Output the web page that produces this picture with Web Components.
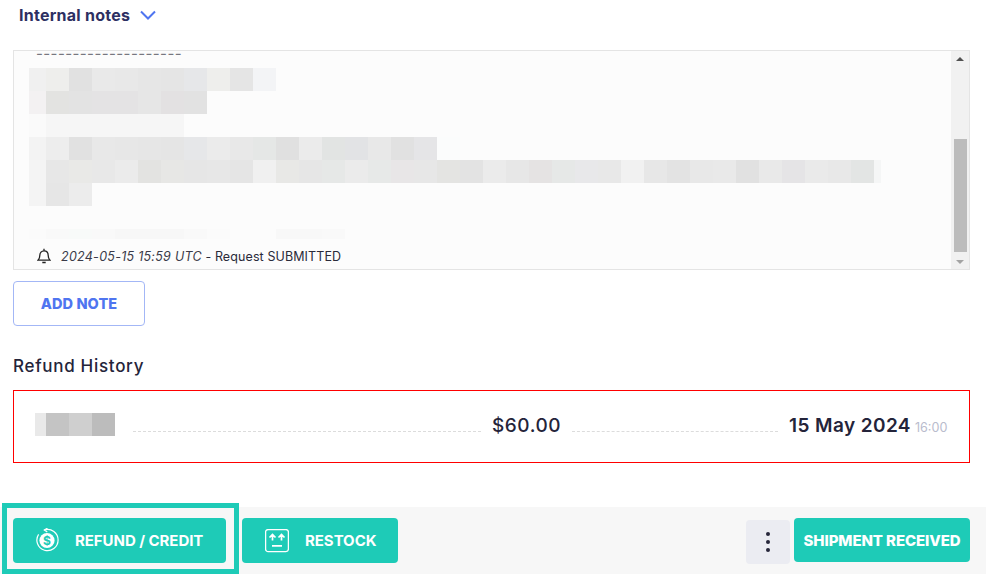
<!DOCTYPE html>
<html lang="en"><head><meta charset="utf-8"><title>Order notes</title>
<style>
html,body{margin:0;padding:0;background:#fff;overflow:hidden;height:574px}
body{font-family:Inter,"Open Sans",sans-serif;color:#24243a}
</style></head><body>
<order-panel></order-panel>
<script>
const tpl=(css,html)=>`<style>${css}</style>${html}`;
class Base extends HTMLElement{constructor(){super();this.attachShadow({mode:'open'});}}

class PixelMosaic extends Base{
  connectedCallback(){
    const first=+(this.getAttribute('first')||17), cell=+(this.getAttribute('cell')||23), h=+(this.getAttribute('row')||23);
    const rows=(this.getAttribute('data')||'').split('|');
    let out='';
    rows.forEach(r=>{
      let m=r.split(':'),rh=m.length>1?+m[0]:h,cols=(m.length>1?m[1]:r).trim();
      out+=`<div class="r" style="height:${rh}px">`;
      if(cols) cols.split(' ').forEach((c,i)=>{
        let w=i===0?first:cell; let p=c.split('/'); if(p[1]) w=+p[1];
        out+=`<i style="width:${w}px;background:${p[0]==='-'?'transparent':'#'+p[0]}"></i>`;
      });
      out+='</div>';
    });
    this.shadowRoot.innerHTML=tpl(`:host{display:block}.r{display:flex}i{display:block;flex:none}`,out);
  }
}
customElements.define('pixel-mosaic',PixelMosaic);

class NotesHeader extends Base{
  connectedCallback(){
    this.shadowRoot.innerHTML=tpl(`:host{display:flex;align-items:center;height:30px;padding-left:19px;font-size:16px;font-weight:700;color:#2d2f62;letter-spacing:.25px}
    svg{margin-left:9px;display:block}`,
    `<span>Internal notes</span><svg width="18" height="10" viewBox="0 0 18 10" fill="none"><path d="M2 1.500l7 7 7-7" stroke="#4f75f0" stroke-width="2"/></svg>`);
  }
}
customElements.define('notes-header',NotesHeader);

class NotesBox extends Base{
  connectedCallback(){
    this.shadowRoot.innerHTML=tpl(`:host{display:flex;box-sizing:border-box;height:220px;border:1px solid #e4e4e4;background:#fcfcfc}
    .c{flex:1;min-width:0;padding-left:15px;display:flex;flex-direction:column}
    .d{height:17px;padding-left:7px;font-size:15px;line-height:5px;color:#77777f;letter-spacing:.4px;white-space:nowrap}
    .log{display:flex;align-items:center;height:30px;padding:4px 0 0 8px;box-sizing:border-box;font-size:12.500px;letter-spacing:.1px;color:#2a2a3a;white-space:pre}
    .log svg{margin-right:10px;flex:none}
    em{font-style:italic;letter-spacing:.27px;color:#3a3a48}
    .bar{flex:none;width:18px;background:#f1f1f1;display:flex;flex-direction:column;align-items:center;box-sizing:border-box}
    .up,.dn{width:0;height:0;border-left:4px solid transparent;border-right:4px solid transparent}
    .up{border-bottom:4px solid #505050;margin-top:6px}
    .dn{border-top:4px solid #a3a3a3;margin-top:auto;margin-bottom:5px}
    .th{width:13px;height:113px;background:#bcbcbc;margin-top:78px}
    `,`<div class="c"><div class="d">--------------------</div>
    <pixel-mosaic data="f0f0f0 eeeeec e1e1e1 e9e9e9 e8e8e8 e6e6e6 e5e5e5 e6e7e9 eeeeec e5e5e5 f3f4f6|f3f1f2 e3e3e1 e3e3e3 e4e3e4 e4e3e4 e6e6e6 e3e1e2 e2e2e2|fafafa f6f6f6 f6f6f6 f6f6f6 f6f6f6 f6f6f6 f6f6f6|f3f3f3 ededed e1e1e1 e8e8e8 e7e7e7 e6e6e6 e5e5e5 e6e7e9 ebebeb e8e8e8 e5e7e6 e0e0e0 ebebeb e2e4e3 e2e3e5 e8e8e8 e1e1e1 e5e5e7 fbfcfc|f4f4f4 e7e7e7 e9e9e7 e8e8e8 ebebeb e3e3e1 e7e7e5 e6e6e6 e7e7e7 e5e5e5 f0f0f0 e8e8e6 e6e6e6 e6e8e7 ebebeb e7e9e8 e8e6e7 e7e7e7 e4e4e2 e3e3e3 ebebeb e7e7e7 e5e3e3 e6e8e7 e8e8ea e8e8e8 f1f1f1 e7e7e7 e3e3e3 e8e8e8 e9e9e9 e1e1e1 e9e9e9 e5e4e6 eaeaea e8e8e8 e3e5e4 f5f6f6/7|f4f4f4 e6e6e6 ececec|23:|10:fbfbfb f9f9f9 f8faf9 f9f9f9 f7f7f7 f7f7f7 f7f7f7 f9f9f9 fbfbfb -/46 f8f8f8 f8f8f8 f9f9f9"></pixel-mosaic>
    <div class="log"><svg width="14" height="16" viewBox="0 0 14 16" fill="none" stroke="#222" stroke-width="1.300"><path d="M1 12.200h12c-1.300-1.300-1.800-2.600-1.800-4.800 0-2.600-1.700-4.600-4.200-4.600S2.800 4.800 2.800 7.400c0 2.200-.5 3.500-1.800 4.800z"/><path d="M7 .8v2M5.300 14.500h3.400"/></svg><em>2024-05-15 15:59 UTC</em> - Request SUBMITTED</div></div>
    <div class="bar"><span class="up"></span><span class="th"></span><span class="dn"></span></div>`);
  }
}
customElements.define('notes-box',NotesBox);

class OutlineButton extends Base{
  connectedCallback(){
    this.shadowRoot.innerHTML=tpl(`:host{display:inline-flex;align-items:center;justify-content:center;box-sizing:border-box;width:132px;height:45px;border:1px solid #a3b7f6;border-radius:4px;color:#4f75f0;font-size:14.500px;font-weight:800;letter-spacing:.1px}`,`<slot></slot>`);
  }
}
customElements.define('outline-button',OutlineButton);

class RefundRow extends Base{
  connectedCallback(){
    this.shadowRoot.innerHTML=tpl(`:host{display:flex;align-items:center;box-sizing:border-box;height:73px;border:1px solid #f00;padding:0 22px 0 21px;color:#24243a}
    pixel-mosaic{margin-bottom:4px}
    .dot{border-bottom:1px dashed #dcdcdc;height:0;margin-top:9px;flex:none}
    .a{font-size:19px;line-height:24px;margin-bottom:2px;font-weight:500;letter-spacing:.55px;flex:none;white-space:nowrap}
    .b{font-weight:600;letter-spacing:.4px}
    .t{font-size:12.600px;color:#b9bccd;margin:1px 0 0 4px;flex:none}
    `,`<pixel-mosaic first="11" data="e9e9e9 c4c4c4 cfcfcf bcbcbc"></pixel-mosaic>
    <span class="dot" style="width:348px;margin-left:18px;margin-right:11px"></span>
    <span class="a">$60.00</span>
    <span class="dot" style="width:206px;margin-left:11px;margin-right:11px"></span>
    <span class="a b">15 May 2024</span><span class="t">16:00</span>`);
  }
}
customElements.define('refund-row',RefundRow);

class ActionButton extends Base{
  connectedCallback(){
    this.shadowRoot.innerHTML=tpl(`:host{display:inline-flex;align-items:center;box-sizing:border-box;height:45px;background:#1ecbb7;border-radius:4px;color:#fff;font-size:15px;font-weight:700;white-space:nowrap}
    ::slotted(svg){display:block;flex:none}`,`<slot></slot>`);
  }
}
customElements.define('action-button',ActionButton);

class ActionBar extends Base{
  connectedCallback(){
    this.shadowRoot.innerHTML=tpl(`:host{display:flex;position:relative;box-sizing:border-box;height:67px;background:#f7f7f7;padding:11px 16px 0 13px;align-items:flex-start}
    .hl{position:absolute;left:2px;top:-4px;width:237px;height:71px;box-sizing:border-box;border:5px solid #1ecbb7;pointer-events:none}
    .sp{flex:1}
    .k{width:44px;height:44px;margin-top:2px;background:#ebecf2;border-radius:4px;display:flex;align-items:center;justify-content:center;margin-right:4px}
    `,`<span class="hl"></span>
    <action-button style="width:213px;padding-left:22px;letter-spacing:-.05px">
      <svg width="25" height="25" viewBox="0 0 25 25" fill="none" style="margin-right:15px"><path d="M9.500 1.900A10.600 10.600 0 1 1 3.600 6.300" stroke="#fff" stroke-width="1.200"/><path d="M12.500 .1 9.300 2l3 2" stroke="#fff" stroke-width="1.200"/><circle cx="12" cy="12.500" r="7.600" fill="#fff"/><text x="12" y="16.700" text-anchor="middle" font-family="Inter,sans-serif" font-size="12" font-weight="700" fill="#1ecbb7">$</text></svg>
      REFUND / CREDIT</action-button>
    <action-button style="width:156px;margin-left:16px;padding-left:23px;letter-spacing:-.05px">
      <svg width="24" height="24" viewBox="0 0 24 24" fill="none" stroke="#fff" stroke-width="1.300" style="margin-right:16px"><rect x=".6" y=".6" width="22.800" height="22" rx="2.500"/><path d="M7.500 11.500V5.500M4.500 8.500l3-3 3 3M16.500 11.500V5.500M13.500 8.500l3-3 3 3M7 16.800h10" stroke-width="1.700"/></svg>
      RESTOCK</action-button>
    <span class="sp"></span>
    <div class="k"><svg width="4" height="20" viewBox="0 0 4 20" fill="#26263a"><circle cx="2" cy="2" r="2"/><circle cx="2" cy="10" r="2"/><circle cx="2" cy="18" r="2"/></svg></div>
    <action-button style="width:176px;height:44px;justify-content:center;font-weight:800;letter-spacing:-.1px">SHIPMENT RECEIVED</action-button>`);
  }
}
customElements.define('action-bar',ActionBar);

class OrderPanel extends Base{
  connectedCallback(){
    this.shadowRoot.innerHTML=tpl(`:host{display:flex;flex-direction:column;width:986px;height:574px;overflow:hidden}
    .m{padding:0 16px 0 13px;display:block}
    h2{margin:0;font-size:17px;font-weight:500;color:#24243a;letter-spacing:.7px;line-height:24px}
    `,`<notes-header></notes-header>
    <div class="m" style="margin-top:20px"><notes-box></notes-box></div>
    <div class="m" style="margin-top:11px;height:45px"><outline-button>ADD NOTE</outline-button></div>
    <div class="m" style="margin-top:28px"><h2>Refund History</h2></div>
    <div class="m" style="margin-top:12px"><refund-row></refund-row></div>
    <action-bar style="margin-top:44px"></action-bar>`);
  }
}
customElements.define('order-panel',OrderPanel);
</script>
</body></html>
